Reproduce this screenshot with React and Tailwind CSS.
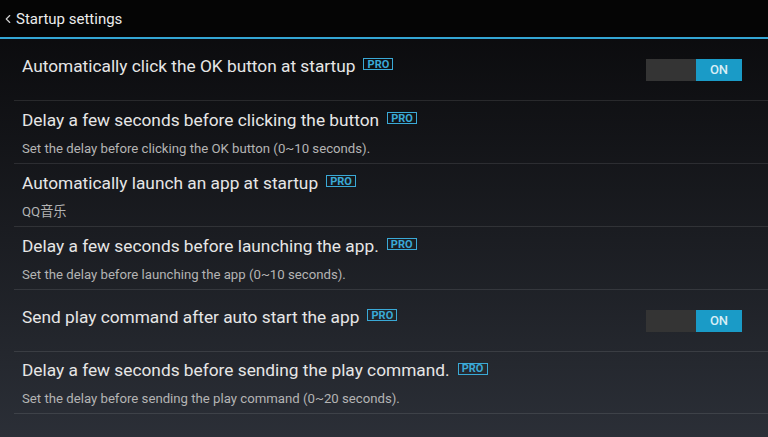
import { FiChevronLeft } from "react-icons/fi";

const rows = [
  {
    title: "Automatically click the OK button at startup",
    toggle: true,
    h: "h-[62px]",
  },
  {
    title: "Delay a few seconds before clicking the button",
    sub: "Set the delay before clicking the OK button (0~10 seconds).",
    h: "h-[63px]",
  },
  {
    title: "Automatically launch an app at startup",
    sub: "QQ音乐",
    h: "h-[63px]",
  },
  {
    title: "Delay a few seconds before launching the app.",
    sub: "Set the delay before launching the app (0~10 seconds).",
    h: "h-[63px]",
  },
  {
    title: "Send play command after auto start the app",
    toggle: true,
    h: "h-[62px]",
  },
  {
    title: "Delay a few seconds before sending the play command.",
    sub: "Set the delay before sending the play command (0~20 seconds).",
    h: "h-[62px]",
  },
];

const ProBadge = () => (
  <span className="ml-[8px] mb-[3px] inline-flex h-[12px] w-[30px] items-center justify-center border border-[#3aa9d6] text-[11px] font-bold leading-none text-[#3aa9d6]">
    PRO
  </span>
);

const Toggle = () => (
  <div className="flex h-[22px] w-[96px] shrink-0">
    <div className="w-[50px] bg-[#343434]" />
    <div className="flex w-[46px] items-center justify-center bg-[#1a9bc7] text-[13px] font-medium text-[#d8eef6]">
      ON
    </div>
  </div>
);

const Row = ({ title, sub, toggle, h }) => (
  <div className={`${h} ml-[14px] flex items-center border-b border-white/10 pr-[26px]`}>
    <div className={`flex flex-1 flex-col pl-[8px] ${sub ? "pt-[1px]" : "pb-[8px]"}`}>
      <div className="flex items-center text-[17.3px] leading-[22px] text-[#e6e6e6]">
        <span>{title}</span>
        <ProBadge />
      </div>
      {sub && (
        <div className="mt-[10px] text-[13.2px] leading-[16px] text-[#b4b4b4]">
          {sub}
        </div>
      )}
    </div>
    {toggle && <Toggle />}
  </div>
);

export default function App() {
  return (
    <div
      className="flex h-[437px] w-[768px] flex-col overflow-hidden bg-gradient-to-b from-[#09090b] to-[#2b2f37] text-white"
      style={{ fontFamily: "Roboto, 'Noto Sans CJK SC', sans-serif" }}
    >
      <div className="flex h-[37px] items-center bg-[#050505] pl-[1px] pt-[1px]">
        <FiChevronLeft className="text-[14px] text-[#cfcfcf]" />
        <span className="ml-[1px] text-[15px] text-[#ececec]">Startup settings</span>
      </div>
      <div className="h-[2px] bg-[#34a6d4]" />
      {rows.map((r) => (
        <Row key={r.title} {...r} />
      ))}
    </div>
  );
}
